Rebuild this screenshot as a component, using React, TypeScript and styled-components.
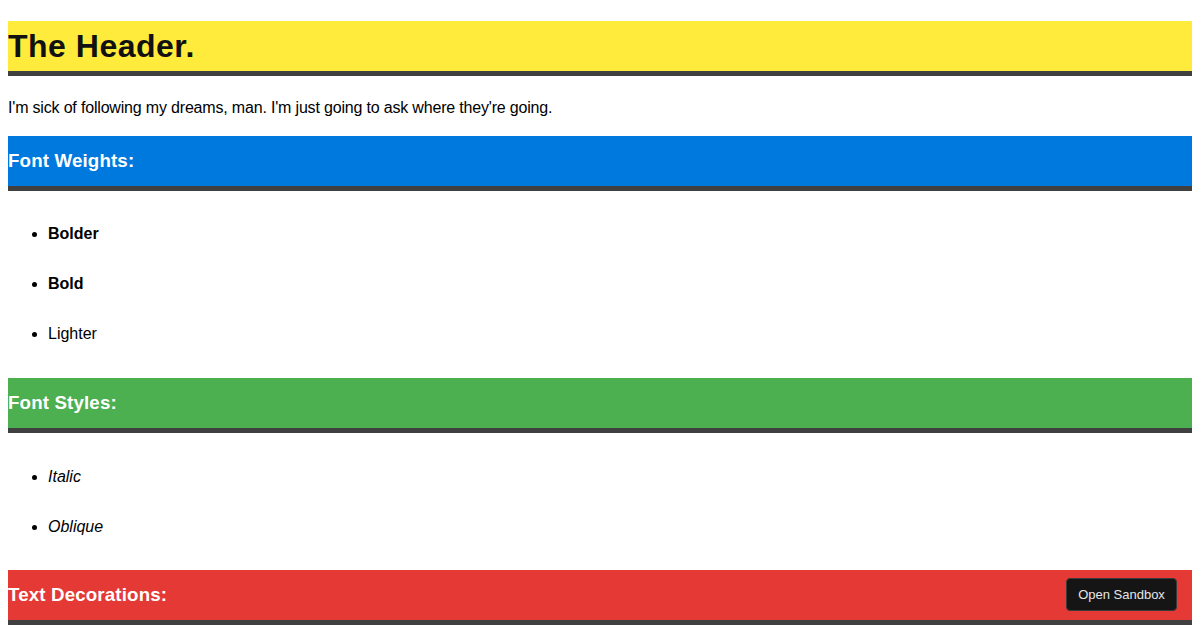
import styled, { createGlobalStyle } from 'styled-components';

const GlobalStyle = createGlobalStyle`
  body {
    margin: 8px;
    font-family: "Liberation Sans", Arial, sans-serif;
    color: #000;
    background: #fff;
  }
`;

const Header = styled.h1`
  margin: 13px 0 21.44px;
  height: 50px;
  line-height: 50px;
  font-size: 32px;
  font-weight: bold;
  letter-spacing: 0.5px;
  color: #111;
  background: #ffeb3b;
  border-bottom: 5px solid #404040;
`;

const Intro = styled.p`
  margin: 22.5px 0 19px;
  font-size: 16px;
  letter-spacing: -0.18px;
`;

const SectionTitle = styled.h3<{ $bg: string }>`
  margin: 18.72px 0;
  height: 50px;
  line-height: 50px;
  font-size: 18.72px;
  font-weight: bold;
  letter-spacing: 0.15px;
  color: #fff;
  background: ${(p) => p.$bg};
  border-bottom: 5px solid #404040;
`;

const List = styled.ul`
  margin: 16px 0;
  padding-left: 40px;
`;

const Item = styled.li<{ $weight?: string; $italic?: boolean }>`
  line-height: 50px;
  font-size: 16px;
  font-weight: ${(p) => p.$weight ?? 'normal'};
  font-style: ${(p) => (p.$italic ? 'italic' : 'normal')};
`;

const SandboxButton = styled.a`
  position: fixed;
  right: 23px;
  bottom: 19px;
  width: 111px;
  height: 33px;
  box-sizing: border-box;
  display: flex;
  align-items: center;
  justify-content: center;
  background: #151515;
  border: 1px solid #3a3a3a;
  border-radius: 4px;
  color: #e6e6e6;
  font-family: "Liberation Sans", Arial, sans-serif;
  font-size: 13px;
  text-decoration: none;
`;

export default function App() {
  return (
    <>
      <GlobalStyle />
      <Header>The Header.</Header>
      <Intro>I'm sick of following my dreams, man. I'm just going to ask where they're going.</Intro>

      <SectionTitle $bg="#0079de">Font Weights:</SectionTitle>
      <List>
        <Item $weight="bolder">Bolder</Item>
        <Item $weight="bold">Bold</Item>
        <Item $weight="lighter">Lighter</Item>
      </List>

      <SectionTitle $bg="#4caf50">Font Styles:</SectionTitle>
      <List>
        <Item $italic>Italic</Item>
        <Item $italic>Oblique</Item>
      </List>

      <SectionTitle $bg="#e53935">Text Decorations:</SectionTitle>

      <SandboxButton href="#">Open Sandbox</SandboxButton>
    </>
  );
}
